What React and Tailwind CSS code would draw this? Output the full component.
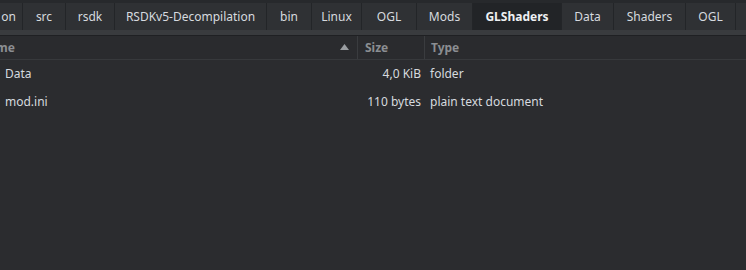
import React from "react";

const tabs = [
  { label: "on", w: 23, first: true },
  { label: "src", w: 43 },
  { label: "rsdk", w: 49 },
  { label: "RSDKv5-Decompilation", w: 152 },
  { label: "bin", w: 45 },
  { label: "Linux", w: 50 },
  { label: "OGL", w: 55 },
  { label: "Mods", w: 56 },
  { label: "GLShaders", w: 89, active: true },
  { label: "Data", w: 52 },
  { label: "Shaders", w: 72 },
  { label: "OGL", w: 50 },
  { label: "", w: 20 },
];

export default function App() {
  return (
    <div
      className="w-[746px] h-[270px] overflow-hidden bg-[#2b2c2f] text-[12px] text-[#d6dadf]"
      style={{ fontFamily: '"Noto Sans", "Open Sans", sans-serif' }}
    >
      <div className="h-[30px] pt-[3px] bg-[#27292c] flex">
        {tabs.map((t, i) => (
          <div
            key={i}
            style={{ width: t.w }}
            className={
              "shrink-0 h-[27px] flex items-center border-r border-[#232528] " +
              (t.active
                ? "bg-[#222427] font-bold text-[#eef0f2] justify-center"
                : "bg-[#2f3134] justify-center") +
              (t.first ? " !justify-end pr-[6px]" : "")
            }
          >
            <span className="whitespace-nowrap leading-none">{t.label}</span>
          </div>
        ))}
      </div>
      <div className="h-[5px] bg-[#393b3e]" />
      <div className="h-px bg-[#1f2023]" />
      <div className="h-[24px] flex items-center bg-[#2a2b2e] border-b border-[#37393c] text-[#8b8e92] font-bold">
        <div className="w-[358px] h-full flex items-center relative border-r border-[#3a3c3f]">
          <span className="ml-[-21px]">Name</span>
          <svg
            className="absolute left-[340px] top-[8px]"
            width="9"
            height="6"
            viewBox="0 0 9 6"
          >
            <polygon points="4.5,0 9,6 0,6" fill="#9a9da1" />
          </svg>
        </div>
        <div className="w-[67px] h-full flex items-center pl-[7px] border-r border-[#3a3c3f]">
          Size
        </div>
        <div className="flex-1 h-full flex items-center pl-[6px]">Type</div>
      </div>
      <div className="flex flex-col">
        <Row name="Data" size="4,0 KiB" type="folder" />
        <Row name="mod.ini" size="110 bytes" type="plain text document" />
      </div>
    </div>
  );
}

function Row({ name, size, type }) {
  return (
    <div className="h-[28px] flex items-center">
      <div className="w-[358px] pl-[5px]">{name}</div>
      <div className="w-[63px] text-right whitespace-nowrap">{size}</div>
      <div className="pl-[9px] whitespace-nowrap">{type}</div>
    </div>
  );
}
